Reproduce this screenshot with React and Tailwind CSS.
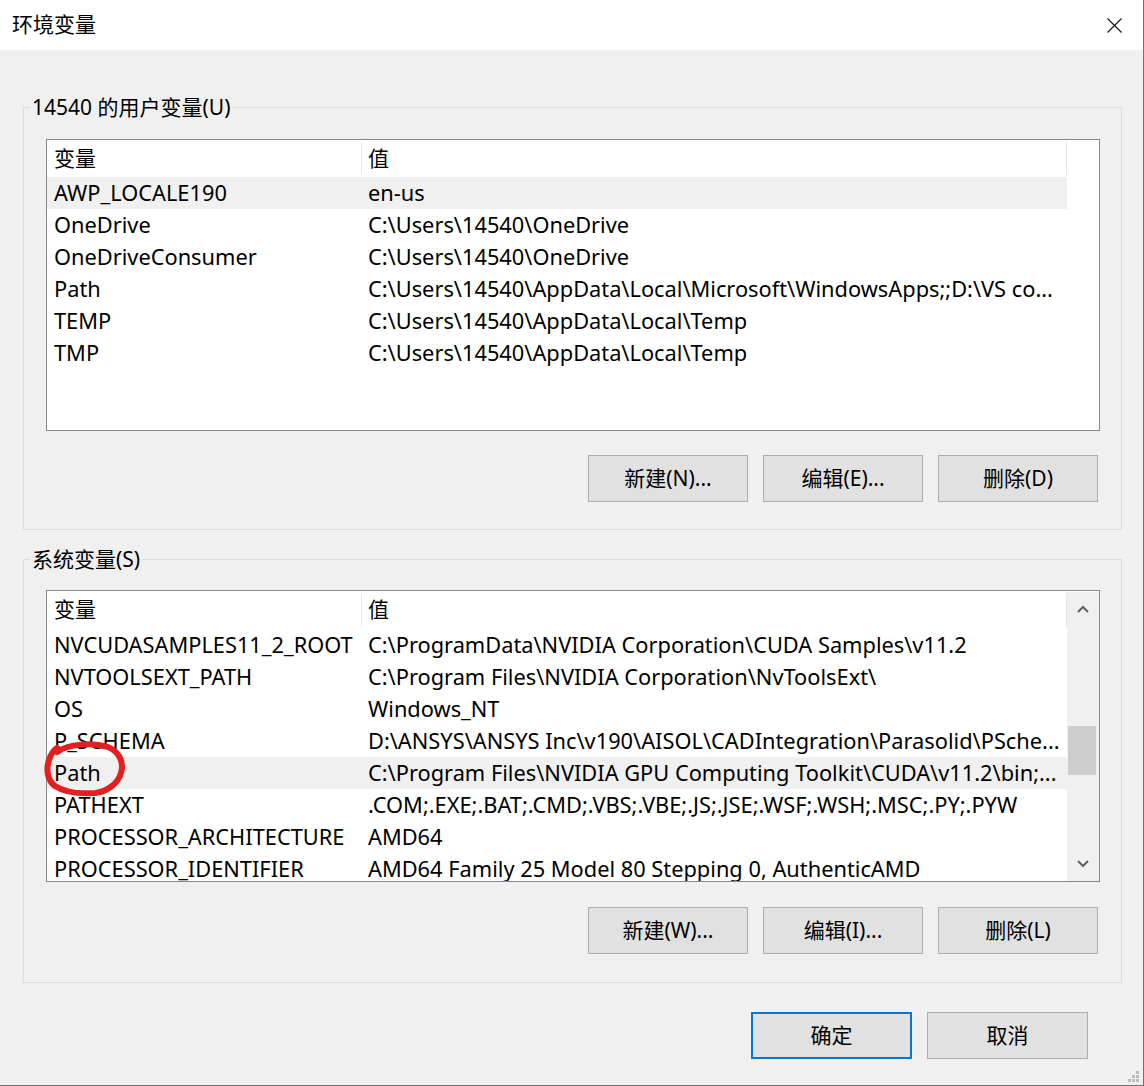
import React from "react";

const FONT = {
  fontFamily: '"Noto Sans", "Noto Sans CJK SC", sans-serif',
};

const userVars = [
  ["AWP_LOCALE190", "en-us"],
  ["OneDrive", "C:\\Users\\14540\\OneDrive"],
  ["OneDriveConsumer", "C:\\Users\\14540\\OneDrive"],
  ["Path", "C:\\Users\\14540\\AppData\\Local\\Microsoft\\WindowsApps;;D:\\VS co..."],
  ["TEMP", "C:\\Users\\14540\\AppData\\Local\\Temp"],
  ["TMP", "C:\\Users\\14540\\AppData\\Local\\Temp"],
];

const sysVars = [
  ["NVCUDASAMPLES11_2_ROOT", "C:\\ProgramData\\NVIDIA Corporation\\CUDA Samples\\v11.2"],
  ["NVTOOLSEXT_PATH", "C:\\Program Files\\NVIDIA Corporation\\NvToolsExt\\"],
  ["OS", "Windows_NT"],
  ["P_SCHEMA", "D:\\ANSYS\\ANSYS Inc\\v190\\AISOL\\CADIntegration\\Parasolid\\PSche..."],
  ["Path", "C:\\Program Files\\NVIDIA GPU Computing Toolkit\\CUDA\\v11.2\\bin;..."],
  ["PATHEXT", ".COM;.EXE;.BAT;.CMD;.VBS;.VBE;.JS;.JSE;.WSF;.WSH;.MSC;.PY;.PYW"],
  ["PROCESSOR_ARCHITECTURE", "AMD64"],
  ["PROCESSOR_IDENTIFIER", "AMD64 Family 25 Model 80 Stepping 0, AuthenticAMD"],
];

const Chevron = ({ up }) => (
  <svg width="12" height="8" viewBox="0 0 12 8" fill="none">
    <path
      d={up ? "M1 7 L6 2 L11 7" : "M1 1 L6 6 L11 1"}
      stroke="#606060"
      strokeWidth="2"
    />
  </svg>
);

const Header = ({ h }) => (
  <div className={`flex shrink-0 ${h}`}>
    <div className="w-[314px] pl-[7px] flex items-center">变量</div>
    <div className="w-px bg-[#e5e5e5] my-[2px]" />
    <div className="w-[704px] pl-[6px] flex items-center">值</div>
    <div className="w-px bg-[#e5e5e5] my-[2px]" />
  </div>
);

const Row = ({ name, value, active }) => (
  <div
    className={`flex h-[32px] shrink-0 w-[1020px] text-[21.8px] ${
      active ? "bg-[#f0f0f0]" : ""
    }`}
  >
    <div className="w-[315px] pl-[7px] flex items-center whitespace-nowrap overflow-hidden">
      {name}
    </div>
    <div className="w-[705px] pl-[6px] flex items-center whitespace-nowrap overflow-hidden">
      {value}
    </div>
  </div>
);

const VarList = ({ rows, activeIdx, headerH, scroll }) => (
  <div className="w-[1054px] h-[292px] border border-[#828790] bg-white flex overflow-hidden">
    <div className="flex flex-col w-[1020px]">
      <Header h={headerH} />
      {rows.map(([n, v], i) => (
        <Row key={n + i} name={n} value={v} active={i === activeIdx} />
      ))}
    </div>
    {scroll && (
      <div className="flex-1 flex flex-col bg-[#f0f0f0] mt-[1px]">
        <div className="h-[34px] flex items-center justify-center">
          <Chevron up />
        </div>
        <div className="flex-1 pl-px pr-[3px]">
          <div className="h-[49px] bg-[#cdcdcd] mt-[100px]" />
        </div>
        <div className="h-[34px] flex items-center justify-center">
          <Chevron />
        </div>
      </div>
    )}
  </div>
);

const Btn = ({ children, primary, w = "w-[160px]" }) => (
  <button
    type="button"
    className={`${w} h-[47px] bg-[#e1e1e1] text-black ${
      primary ? "border-2 border-[#0078d7]" : "border border-[#adadad]"
    }`}
  >
    {children}
  </button>
);

const Group = ({ label, children, className }) => (
  <fieldset className={`w-[1099px] border border-[#dcdcdc] pl-[22px] ${className}`}>
    <legend className="-ml-[16px] px-[2px] h-[30px] leading-[30px]">{label}</legend>
    {children}
  </fieldset>
);

export default function App() {
  return (
    <div
      style={FONT}
      className="relative w-[1144px] h-[1086px] bg-[#f0f0f0] border-r border-b border-[#707070] text-[21px] text-black flex flex-col overflow-hidden"
    >
      {/* 标题栏 */}
      <div className="h-[50px] bg-white flex items-center justify-between pl-[12px] pr-[21px] shrink-0">
        <span>环境变量</span>
        <svg width="15" height="15" viewBox="0 0 15 15">
          <path d="M0.5 0.5 L14.5 14.5 M14.5 0.5 L0.5 14.5" stroke="#111" strokeWidth="1.1" />
        </svg>
      </div>

      <div className="pl-[23px] flex flex-col">
        {/* 用户变量 */}
        <Group label="14540 的用户变量(U)" className="mt-[42px] pt-[17px] pb-[27px]">
          <VarList rows={userVars} activeIdx={0} headerH="h-[37px]" />
          <div className="w-[1054px] flex justify-end gap-[15px] pr-[2px] mt-[24px]">
            <Btn>新建(N)...</Btn>
            <Btn>编辑(E)...</Btn>
            <Btn>删除(D)</Btn>
          </div>
        </Group>

        {/* 系统变量 */}
        <Group label="系统变量(S)" className="mt-[14px] pt-[16px] pb-[28px]">
          <VarList rows={sysVars} activeIdx={4} headerH="h-[38px]" scroll />
          <div className="w-[1054px] flex justify-end gap-[15px] pr-[2px] mt-[25px]">
            <Btn>新建(W)...</Btn>
            <Btn>编辑(I)...</Btn>
            <Btn>删除(L)</Btn>
          </div>
        </Group>

        <div className="w-[1065px] flex justify-end gap-[15px] mt-[29px]">
          <Btn primary w="w-[161px]">确定</Btn>
          <Btn w="w-[161px]">取消</Btn>
        </div>
      </div>

      {/* 右下角拖动手柄 */}
      <svg className="absolute right-[3px] bottom-[2px]" width="12" height="12" viewBox="0 0 12 12">
        <g fill="#bcbcbc">
          <rect x="8" y="0" width="3" height="3" />
          <rect x="4" y="4" width="3" height="3" />
          <rect x="8" y="4" width="3" height="3" />
          <rect x="0" y="8" width="3" height="3" />
          <rect x="4" y="8" width="3" height="3" />
          <rect x="8" y="8" width="3" height="3" />
        </g>
      </svg>

      {/* 红色标注 */}
      <svg className="absolute left-0 top-0 pointer-events-none" width="1144" height="1086">
        <path
          d="M57 752 C68 744 92 742 108 747 C120 752 124 763 121 773 C118 784 106 792 95 793 C80 794 64 792 55 786 C47 780 46 769 49 760 C51 754 54 750 57 748"
          fill="none"
          stroke="#e3201f"
          strokeWidth="6"
          strokeLinecap="round"
        />
        <circle cx="57" cy="750" r="4" fill="#e3201f" />
      </svg>
    </div>
  );
}
